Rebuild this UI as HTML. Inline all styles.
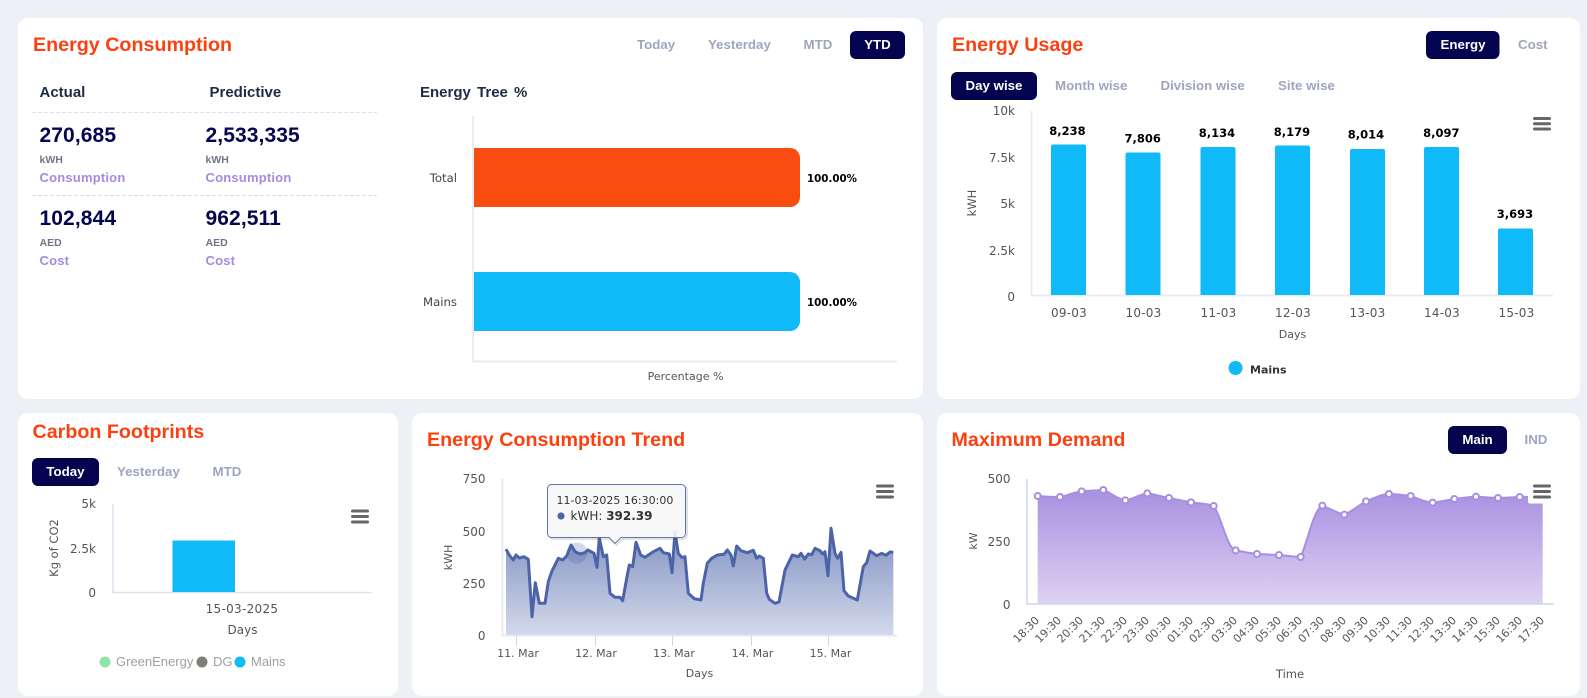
<!DOCTYPE html>
<html><head><meta charset="utf-8"><title>Energy Dashboard</title>
<style>
html,body{margin:0;padding:0;background:#edf1f6;width:1587px;height:698px;overflow:hidden}
svg{display:block}
text{font-family:"DejaVu Sans",sans-serif;font-size:11px;fill:#555}
.k{font-size:12px}
.x{font-size:12px;letter-spacing:.25px}
.t{font-family:"Liberation Sans",Arial,sans-serif;font-weight:700;font-size:19.7px;fill:#fb4110}
.tab{font-family:"Liberation Sans",Arial,sans-serif;font-weight:700;font-size:13.3px;fill:#9fa4bf}
.on{font-family:"Liberation Sans",Arial,sans-serif;font-weight:700;font-size:13.3px;fill:#fff;text-anchor:middle}
.h{font-family:"Liberation Sans",Arial,sans-serif;font-weight:700;font-size:15px;fill:#1f2a44}
.n{font-family:"Liberation Sans",Arial,sans-serif;font-weight:700;font-size:21px;fill:#03054f;letter-spacing:.1px}
.u{font-family:"Liberation Sans",Arial,sans-serif;font-weight:700;font-size:10.5px;fill:#6e7687}
.c{font-family:"Liberation Sans",Arial,sans-serif;font-weight:700;font-size:13px;fill:#a58be0;letter-spacing:.2px}
.r{text-anchor:end}.m{text-anchor:middle}
.dl{font-weight:700;font-size:11.5px;fill:#000;text-anchor:middle}
.lg{font-family:"Liberation Sans",Arial,sans-serif;font-size:13px;fill:#a0a0a0}
.cat{font-size:11.7px;fill:#444}
</style></head><body>
<svg width="1587" height="698" viewBox="0 0 1587 698" xmlns="http://www.w3.org/2000/svg">
<defs>
<linearGradient id="gb" gradientUnits="userSpaceOnUse" x1="0" y1="540" x2="0" y2="635"><stop offset="0" stop-color="#8a99c6"/><stop offset="1" stop-color="#d3d9eb"/></linearGradient>
<linearGradient id="gp" gradientUnits="userSpaceOnUse" x1="0" y1="230" x2="0" y2="581"><stop offset="0" stop-color="#a78ee0"/><stop offset="1" stop-color="#dcd2f2"/></linearGradient>
</defs>
<g fill="#fff">
<rect x="18" y="18" width="905" height="381" rx="10"/>
<rect x="937" y="18" width="643" height="381" rx="10"/>
<rect x="18" y="413" width="380" height="283" rx="10"/>
<rect x="412" y="413" width="511" height="283" rx="10"/>
<rect x="937" y="413" width="643" height="283" rx="10"/>
</g>

<!-- Energy Consumption -->
<text class="t" x="33" y="51">Energy Consumption</text>
<text class="tab" x="637" y="49">Today</text>
<text class="tab" x="708" y="49">Yesterday</text>
<text class="tab" x="803.5" y="49">MTD</text>
<rect x="850" y="31" width="55" height="28" rx="6" fill="#03034f"/>
<text class="on" x="877.5" y="49">YTD</text>
<text class="h" x="39.5" y="97">Actual</text>
<text class="h" x="209.5" y="97">Predictive</text>
<text class="h" x="420" y="97" style="word-spacing:2px">Energy Tree %</text>
<line x1="32" y1="112.5" x2="377" y2="112.5" stroke="#dde1ec" stroke-dasharray="4 2"/>
<line x1="32" y1="195.5" x2="377" y2="195.5" stroke="#dde1ec" stroke-dasharray="4 2"/>
<text class="n" x="39.5" y="142">270,685</text>
<text class="u" x="39.5" y="163">kWH</text>
<text class="c" x="39.5" y="182">Consumption</text>
<text class="n" x="205.5" y="142">2,533,335</text>
<text class="u" x="205.5" y="163">kWH</text>
<text class="c" x="205.5" y="182">Consumption</text>
<text class="n" x="39.5" y="225">102,844</text>
<text class="u" x="39.5" y="246">AED</text>
<text class="c" x="39.5" y="265">Cost</text>
<text class="n" x="205.5" y="225">962,511</text>
<text class="u" x="205.5" y="246">AED</text>
<text class="c" x="205.5" y="265">Cost</text>
<path d="M473 116V361.5H897" fill="none" stroke="#e8ecf3" stroke-width="2"/>
<path d="M474 148H790a10 10 0 0 1 10 10V197a10 10 0 0 1-10 10H474Z" fill="#f84c10"/>
<path d="M474 272H790a10 10 0 0 1 10 10V321a10 10 0 0 1-10 10H474Z" fill="#10b9f7"/>
<text class="r cat" x="457" y="182">Total</text>
<text class="r cat" x="457" y="306">Mains</text>
<text x="807" y="182" style="fill:#000;font-weight:700;font-size:11px" textLength="50" lengthAdjust="spacingAndGlyphs">100.00%</text>
<text x="807" y="306" style="fill:#000;font-weight:700;font-size:11px" textLength="50" lengthAdjust="spacingAndGlyphs">100.00%</text>
<text class="m" x="685.5" y="380">Percentage %</text>

<!-- Energy Usage -->
<text class="t" x="952" y="51">Energy Usage</text>
<rect x="1426" y="31" width="73.5" height="28" rx="6" fill="#03034f"/>
<text class="on" x="1463" y="49">Energy</text>
<text class="tab" x="1518" y="49">Cost</text>
<rect x="951" y="72" width="86" height="28" rx="6" fill="#03034f"/>
<text class="on" x="994" y="90">Day wise</text>
<text class="tab" x="1055" y="90">Month wise</text>
<text class="tab" x="1160.5" y="90">Division wise</text>
<text class="tab" x="1278" y="90">Site wise</text>
<path d="M1031.5 111V295.5H1553" fill="none" stroke="#e8ecf3" stroke-width="2"/>
<g fill="#10b9f7">
<path d="M1051 295V146.5a2 2 0 0 1 2-2h31a2 2 0 0 1 2 2V295Z"/>
<path d="M1125.5 295V154.5a2 2 0 0 1 2-2h31a2 2 0 0 1 2 2V295Z"/>
<path d="M1200.5 295V149a2 2 0 0 1 2-2h31a2 2 0 0 1 2 2V295Z"/>
<path d="M1275 295V147.5a2 2 0 0 1 2-2h31a2 2 0 0 1 2 2V295Z"/>
<path d="M1350 295V151a2 2 0 0 1 2-2h31a2 2 0 0 1 2 2V295Z"/>
<path d="M1424 295V149a2 2 0 0 1 2-2h31a2 2 0 0 1 2 2V295Z"/>
<path d="M1498 295V230.5a2 2 0 0 1 2-2h31a2 2 0 0 1 2 2V295Z"/>
</g>
<text class="dl" x="1067.5" y="135">8,238</text>
<text class="dl" x="1142.7" y="142.5">7,806</text>
<text class="dl" x="1217" y="137">8,134</text>
<text class="dl" x="1292" y="136">8,179</text>
<text class="dl" x="1366" y="138.500">8,014</text>
<text class="dl" x="1441.3" y="137">8,097</text>
<text class="dl" x="1515" y="218">3,693</text>
<text class="r k" x="1015" y="115">10k</text>
<text class="r k" x="1015" y="162">7.5k</text>
<text class="r k" x="1015" y="208">5k</text>
<text class="r k" x="1015" y="255">2.5k</text>
<text class="r k" x="1015" y="301">0</text>
<text class="m" style="font-size:11.5px" transform="rotate(-90 976 203)" x="976" y="203">kWH</text>
<text class="m x" x="1069" y="317">09-03</text>
<text class="m x" x="1143.5" y="317">10-03</text>
<text class="m x" x="1218.5" y="317">11-03</text>
<text class="m x" x="1293" y="317">12-03</text>
<text class="m x" x="1367.5" y="317">13-03</text>
<text class="m x" x="1442" y="317">14-03</text>
<text class="m x" x="1516.5" y="317">15-03</text>
<text class="m" x="1292.5" y="338">Days</text>
<circle cx="1235.5" cy="368" r="7" fill="#10b9f7"/>
<text x="1250" y="373.5" style="font-weight:700;fill:#333">Mains</text>
<g stroke="#666" stroke-width="3" stroke-linecap="round"><path d="M1534.5 118.5H1549.5M1534.5 123.800H1549.5M1534.5 129H1549.5"/></g>

<!-- Carbon Footprints -->
<text class="t" x="32.5" y="438">Carbon Footprints</text>
<rect x="32" y="458" width="67" height="28" rx="6" fill="#03034f"/>
<text class="on" x="65.5" y="476">Today</text>
<text class="tab" x="117" y="476">Yesterday</text>
<text class="tab" x="212.5" y="476">MTD</text>
<path d="M113 504V592.5H372" fill="none" stroke="#dbe3f1" stroke-width="1.5"/>
<rect x="172.5" y="540.5" width="62.5" height="51.5" fill="#10b9f7"/>
<text class="r k" x="96" y="508">5k</text>
<text class="r k" x="96" y="553">2.5k</text>
<text class="r k" x="96" y="597">0</text>
<text class="m" style="font-size:11.5px" transform="rotate(-90 58 548)" x="58" y="548">Kg of CO2</text>
<text class="m k" style="letter-spacing:.3px" x="242" y="613">15-03-2025</text>
<text class="m k" x="242.5" y="634">Days</text>
<circle cx="105" cy="662" r="5.5" fill="#90e4a8"/>
<circle cx="202" cy="662" r="5.5" fill="#7f7f78"/>
<circle cx="240" cy="662" r="5.5" fill="#10b9f7"/>
<text class="lg" x="116" y="666">GreenEnergy</text>
<text class="lg" x="213" y="666">DG</text>
<text class="lg" x="251" y="666">Mains</text>
<g stroke="#666" stroke-width="3" stroke-linecap="round"><path d="M352.500 511H367.500M352.500 516.500H367.500M352.500 522H367.500"/></g>

<!-- Trend -->
<text class="t" x="427" y="446">Energy Consumption Trend</text>
<path d="M502.500 479V635.5H897" fill="none" stroke="#e6eaf2" stroke-width="2"/>
<path d="M516.5 636V646M595.5 636V646M672.5 636V646M751.5 636V646M828.5 636V646" stroke="#ccd6eb" stroke-width="1"/>
<path fill="url(#gb)" d="M506 635V549.3L509.3 555L513.3 560L516 555L519.3 558L524 556.7L528.3 559.3L532 616.7L535.3 582.7L539.3 603.3L545 603.3L548.3 581.7L551.7 571.7L558.3 558.3L562.7 560L566.7 556L571 545L575 551.7L580 554L585 552.7L587.7 550L594 553.3L597 567.3L599.3 538L603.3 556.7L606.7 555L610 593.3L615 597.3L620 597.3L622.7 600.7L626.7 578.3L629.3 565L632.7 566.7L636 542.3L640.7 555L645 557.3L653.3 551.7L660 548.3L663.3 552.7L669.3 554L672 572.7L675 531.7L678.3 553.3L681.7 557.3L685 556.7L688.3 593.3L694.3 598.7L701 600L703.3 583.3L707.3 563.3L711.7 558.3L717.3 555L724 554.3L727.3 550L731 555L733.3 566L736.7 546L741 550.7L747.3 552.7L753.3 550.3L756.7 558.3L759.3 556L763.3 558.3L766.7 593.3L769.3 599.3L775 603.3L779 602L785 570L792.3 555L798.3 556.7L801 553.3L804.7 559L808.3 554L811.7 554.7L815 548.3L820 550.7L822.7 554L825 551.7L828 575.7L831 528.3L835 553.3L837.7 558.3L841 552.3L844 590.7L848.3 596L857.3 600L863.3 566.7L866.7 562.7L870 551L876.7 555.7L881.7 553.3L886 555.3L890 552L893.3 552.3V635Z"/>
<path fill="none" stroke="#4c63a8" stroke-width="3" stroke-linejoin="round" d="M506 549.3L509.3 555L513.3 560L516 555L519.3 558L524 556.7L528.3 559.3L532 616.7L535.3 582.7L539.3 603.3L545 603.3L548.3 581.7L551.7 571.7L558.3 558.3L562.7 560L566.7 556L571 545L575 551.7L580 554L585 552.7L587.7 550L594 553.3L597 567.3L599.3 538L603.3 556.7L606.7 555L610 593.3L615 597.3L620 597.3L622.7 600.7L626.7 578.3L629.3 565L632.7 566.7L636 542.3L640.7 555L645 557.3L653.3 551.7L660 548.3L663.3 552.7L669.3 554L672 572.7L675 531.7L678.3 553.3L681.7 557.3L685 556.7L688.3 593.3L694.3 598.7L701 600L703.3 583.3L707.3 563.3L711.7 558.3L717.3 555L724 554.3L727.3 550L731 555L733.3 566L736.7 546L741 550.7L747.3 552.7L753.3 550.3L756.7 558.3L759.3 556L763.3 558.3L766.7 593.3L769.3 599.3L775 603.3L779 602L785 570L792.3 555L798.3 556.7L801 553.3L804.7 559L808.3 554L811.7 554.7L815 548.3L820 550.7L822.7 554L825 551.7L828 575.7L831 528.3L835 553.3L837.7 558.3L841 552.3L844 590.7L848.3 596L857.3 600L863.3 566.7L866.7 562.7L870 551L876.7 555.7L881.7 553.3L886 555.3L890 552L893.3 552.3"/>
<circle cx="577" cy="553" r="10.5" fill="#4c63a8" fill-opacity=".25"/>
<path transform="translate(1.5 1.5)" d="M551.5 484.500H681.500a4 4 0 0 1 4 4V533.500a4 4 0 0 1-4 4H621L615 543.500L609 537.500H551.500a4 4 0 0 1-4-4V488.500a4 4 0 0 1 4-4Z" fill="none" stroke="#000" stroke-opacity=".15" stroke-width="1.5"/>
<path d="M551.5 484.500H681.500a4 4 0 0 1 4 4V533.500a4 4 0 0 1-4 4H621L615 543.500L609 537.500H551.500a4 4 0 0 1-4-4V488.500a4 4 0 0 1 4-4Z" fill="#f7f7f7" fill-opacity=".9" stroke="#5f74b0" stroke-width="1"/>
<text x="556.5" y="504" style="fill:#333;font-size:11px">11-03-2025 16:30:00</text>
<circle cx="561" cy="516" r="3.6" fill="#4c63a8"/>
<text x="570.5" y="520" style="fill:#333;font-size:12px">kWH: <tspan style="font-weight:700">392.39</tspan></text>
<text class="r k" x="485.5" y="483">750</text>
<text class="r k" x="485.5" y="536">500</text>
<text class="r k" x="485.5" y="588">250</text>
<text class="r k" x="485.5" y="640">0</text>
<text class="m" transform="rotate(-90 452 557.5)" x="452" y="557.5">kWH</text>
<text class="m" x="518" y="657">11. Mar</text>
<text class="m" x="596" y="657">12. Mar</text>
<text class="m" x="674" y="657">13. Mar</text>
<text class="m" x="752.5" y="657">14. Mar</text>
<text class="m" x="830.5" y="657">15. Mar</text>
<text class="m" x="699.5" y="677">Days</text>
<g stroke="#666" stroke-width="3" stroke-linecap="round"><path d="M877.500 486H892.500M877.500 491.500H892.500M877.500 497H892.500"/></g>

<!-- Maximum Demand -->
<text class="t" x="951.5" y="446">Maximum Demand</text>
<rect x="1448" y="426" width="59" height="28" rx="6" fill="#03034f"/>
<text class="on" x="1477.5" y="444">Main</text>
<text class="tab" x="1524.5" y="444">IND</text>
<path d="M1027 479V604H1554" fill="none" stroke="#ccd6eb" stroke-width="1.5"/>
<g transform="translate(930,410) scale(.33333)">
<path fill="url(#gp)" d="M323 258C345 260 368 261 390 261C412 258 433 245 455 244C477 242 498 241 520 240C542 248 564 268 586 271C608 268 630 252 652 250C674 252 695 260 717 264C739 268 761 273 783 277C806 280 829 280 851 288C875 320 890 415 917 421C938 425 960 430 981 432C1003 433 1025 434 1047 435C1069 437 1090 440 1112 441C1135 390 1150 300 1177 287C1200 295 1222 310 1243 314C1265 305 1287 285 1308 274C1330 265 1355 252 1377 252C1399 252 1420 255 1442 258C1464 265 1486 277 1508 278C1530 275 1551 270 1573 267C1595 264 1616 261 1638 260C1660 261 1682 263 1704 264C1726 264 1747 262 1769 261C1792 260 1815 262 1838 262V581H323Z"/>
<path fill="none" stroke="#a78ee0" stroke-width="6" stroke-linejoin="round" d="M323 258C345 260 368 261 390 261C412 258 433 245 455 244C477 242 498 241 520 240C542 248 564 268 586 271C608 268 630 252 652 250C674 252 695 260 717 264C739 268 761 273 783 277C806 280 829 280 851 288C875 320 890 415 917 421C938 425 960 430 981 432C1003 433 1025 434 1047 435C1069 437 1090 440 1112 441C1135 390 1150 300 1177 287C1200 295 1222 310 1243 314C1265 305 1287 285 1308 274C1330 265 1355 252 1377 252C1399 252 1420 255 1442 258C1464 265 1486 277 1508 278C1530 275 1551 270 1573 267C1595 264 1616 261 1638 260C1660 261 1682 263 1704 264C1726 264 1747 262 1769 261C1792 260 1815 262 1838 262"/>
<g fill="#fff" stroke="#a78ee0" stroke-width="6">
<circle cx="323" cy="258" r="9"/><circle cx="390" cy="261" r="9"/><circle cx="455" cy="244" r="9"/><circle cx="520" cy="240" r="9"/><circle cx="586" cy="271" r="9"/><circle cx="652" cy="250" r="9"/><circle cx="717" cy="264" r="9"/><circle cx="783" cy="277" r="9"/><circle cx="851" cy="288" r="9"/><circle cx="917" cy="421" r="9"/><circle cx="981" cy="432" r="9"/><circle cx="1047" cy="435" r="9"/><circle cx="1112" cy="441" r="9"/><circle cx="1177" cy="287" r="9"/><circle cx="1243" cy="314" r="9"/><circle cx="1308" cy="274" r="9"/><circle cx="1377" cy="252" r="9"/><circle cx="1442" cy="258" r="9"/><circle cx="1508" cy="278" r="9"/><circle cx="1573" cy="267" r="9"/><circle cx="1638" cy="260" r="9"/><circle cx="1704" cy="264" r="9"/><circle cx="1769" cy="261" r="9"/>
</g>
</g>
<rect x="1528" y="480" width="24" height="23.500" rx="2" fill="#fff"/>
<g stroke="#666" stroke-width="3" stroke-linecap="round"><path d="M1534.500 486H1549.500M1534.500 491.500H1549.500M1534.500 497H1549.500"/></g>
<text class="r k" x="1010.5" y="483">500</text>
<text class="r k" x="1010.5" y="546">250</text>
<text class="r k" x="1010.5" y="609">0</text>
<text class="m" transform="rotate(-90 977 541)" x="977" y="541">kW</text>
<g>
<text class="r" transform="rotate(-45 1040 621)" x="1040" y="621">18:30</text>
<text class="r" transform="rotate(-45 1062 621)" x="1062" y="621">19:30</text>
<text class="r" transform="rotate(-45 1084 621)" x="1084" y="621">20:30</text>
<text class="r" transform="rotate(-45 1106 621)" x="1106" y="621">21:30</text>
<text class="r" transform="rotate(-45 1128 621)" x="1128" y="621">22:30</text>
<text class="r" transform="rotate(-45 1150 621)" x="1150" y="621">23:30</text>
<text class="r" transform="rotate(-45 1172 621)" x="1172" y="621">00:30</text>
<text class="r" transform="rotate(-45 1194 621)" x="1194" y="621">01:30</text>
<text class="r" transform="rotate(-45 1216 621)" x="1216" y="621">02:30</text>
<text class="r" transform="rotate(-45 1238 621)" x="1238" y="621">03:30</text>
<text class="r" transform="rotate(-45 1260 621)" x="1260" y="621">04:30</text>
<text class="r" transform="rotate(-45 1282 621)" x="1282" y="621">05:30</text>
<text class="r" transform="rotate(-45 1303 621)" x="1303" y="621">06:30</text>
<text class="r" transform="rotate(-45 1325 621)" x="1325" y="621">07:30</text>
<text class="r" transform="rotate(-45 1347 621)" x="1347" y="621">08:30</text>
<text class="r" transform="rotate(-45 1369 621)" x="1369" y="621">09:30</text>
<text class="r" transform="rotate(-45 1391 621)" x="1391" y="621">10:30</text>
<text class="r" transform="rotate(-45 1413 621)" x="1413" y="621">11:30</text>
<text class="r" transform="rotate(-45 1435 621)" x="1435" y="621">12:30</text>
<text class="r" transform="rotate(-45 1457 621)" x="1457" y="621">13:30</text>
<text class="r" transform="rotate(-45 1479 621)" x="1479" y="621">14:30</text>
<text class="r" transform="rotate(-45 1501 621)" x="1501" y="621">15:30</text>
<text class="r" transform="rotate(-45 1523 621)" x="1523" y="621">16:30</text>
<text class="r" transform="rotate(-45 1545 621)" x="1545" y="621">17:30</text>
</g>
<text class="m" style="font-size:11.5px" x="1290" y="678">Time</text>
</svg>
</body></html>
